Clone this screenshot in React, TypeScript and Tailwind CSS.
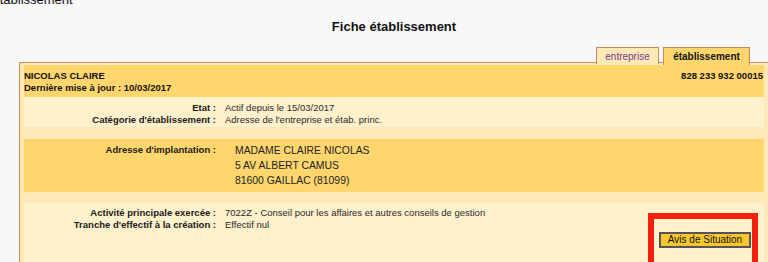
import React from 'react';

const font = { fontFamily: '"Liberation Sans", Arial, sans-serif' };

function Row({ label, value }: { label: string; value: string }) {
  return (
    <div className="flex leading-[11.5px]">
      <div className="w-[192px] shrink-0 text-right font-bold text-[#1a1a1a]">{label}</div>
      <div className="pl-[9px] text-[#2a2a2a]">{value}</div>
    </div>
  );
}

export default function App() {
  return (
    <div className="relative h-[262px] w-[768px] overflow-hidden bg-[#f8f8f8] text-[9.5px]" style={font}>
      {/* page title, scrolled off the top */}
      <div className="-ml-[9px] -mt-[8px] h-[16px] text-[13px] leading-[16px] text-[#111]">Établissement</div>

      <div className="mt-[-3px] pl-[20px] text-center text-[13px] font-bold leading-[16px] text-[#111]">
        <div className="pt-[14px]">Fiche établissement</div>
      </div>

      {/* tabs */}
      <div className="mt-[12px] flex h-[15px] justify-end gap-[4px] pr-[18px]">
        <div className="flex h-[17px] w-[63px] items-center justify-center border border-b-0 border-[#c08a5a] bg-[#fde9b4] text-[10px] text-[#7a3a9a]">
          entreprise
        </div>
        <div className="relative z-10 flex h-[18px] w-[87px] items-center justify-center border border-b-0 border-[#c08a5a] bg-[#ffd66e] text-[10px] font-bold text-[#111]">
          établissement
        </div>
      </div>

      {/* main box */}
      <div className="ml-[19px] border border-r-0 border-[#c8905a] bg-[#fee8b8] pl-[4px] pr-[4px] pt-[2px]">
        {/* header */}
        <div className="flex h-[32px] justify-between bg-[#ffd66e] pt-[5px] font-bold leading-[12px] text-[#111]">
          <div>
            <div>NICOLAS CLAIRE</div>
            <div>Dernière mise à jour : 10/03/2017</div>
          </div>
          <div className="pr-[1px]">828 233 932 00015</div>
        </div>

        {/* etat */}
        <div className="h-[30px] bg-[#fff1cc] pt-[5px]">
          <Row label="Etat :" value="Actif depuis le 15/03/2017" />
          <Row label="Catégorie d'établissement :" value="Adresse de l'entreprise et étab. princ." />
        </div>

        {/* adresse */}
        <div className="mt-[12px] flex h-[53px] bg-[#ffd66e] pt-[4px]">
          <div className="w-[192px] shrink-0 pt-[1px] text-right font-bold leading-[11.5px] text-[#1a1a1a]">
            Adresse d'implantation :
          </div>
          <div className="pl-[19px] text-[10.4px] leading-[15px] text-[#222]">
            <div>MADAME CLAIRE NICOLAS</div>
            <div>5 AV ALBERT CAMUS</div>
            <div>81600 GAILLAC (81099)</div>
          </div>
        </div>

        {/* activite */}
        <div className="mt-[11px] h-[80px] bg-[#fff1cc] pt-[4px]">
          <Row label="Activité principale exercée :" value="7022Z - Conseil pour les affaires et autres conseils de gestion" />
          <Row label="Tranche d'effectif à la création :" value="Effectif nul" />
        </div>
      </div>

      {/* highlighted button */}
      <div className="absolute left-[648px] top-[213px] h-[60px] w-[110px] border-[6px] border-[#f2200c] pl-[5px] pt-[13px]">
        <button className="flex h-[16px] w-[92px] items-center justify-center border-2 border-[#555] bg-[#f7c82e] text-[10px] leading-none text-[#111]">
          Avis de Situation
        </button>
      </div>
    </div>
  );
}
